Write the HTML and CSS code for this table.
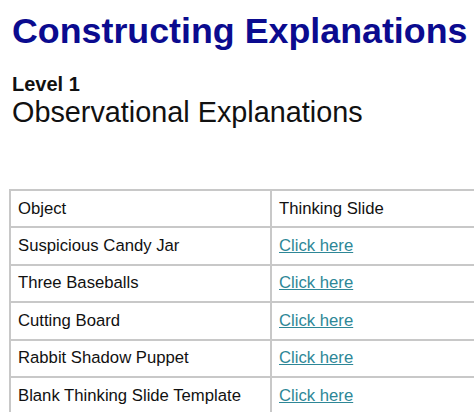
FILE: index.html
```html
<!DOCTYPE html>
<html>
<head>
<meta charset="utf-8">
<link rel="stylesheet" href="styles.css">
</head>
<body>
<h1 class="title">Constructing Explanations</h1>
<h2 class="level">Level 1</h2>
<p class="subtitle">Observational Explanations</p>
<div class="table-wrap">
<table class="grid">
  <tr><td class="c1">Object</td><td class="c2">Thinking Slide</td></tr>
  <tr><td class="c1">Suspicious Candy Jar</td><td class="c2"><a href="#">Click here</a></td></tr>
  <tr><td class="c1">Three Baseballs</td><td class="c2"><a href="#">Click here</a></td></tr>
  <tr><td class="c1">Cutting Board</td><td class="c2"><a href="#">Click here</a></td></tr>
  <tr><td class="c1">Rabbit Shadow Puppet</td><td class="c2"><a href="#">Click here</a></td></tr>
  <tr><td class="c1">Blank Thinking Slide Template</td><td class="c2"><a href="#">Click here</a></td></tr>
</table>
</div>
</body>
</html>
```
FILE: styles.css
```css
html, body { margin: 0; padding: 0; background: #fff; overflow: hidden; }
body { font-family: "Liberation Sans", Arial, sans-serif; color: #111; width: 474px; height: 412px; }
.title { margin: 0; padding: 11px 0 0 12px; font-size: 35.8px; font-weight: bold; color: #0b0b8f; line-height: 40px; white-space: nowrap; }
.level { margin: 21px 0 0 12px; font-size: 20px; font-weight: bold; line-height: 24px; color: #111; }
.subtitle { margin: 0 0 0 12px; font-size: 28.8px; line-height: 32px; color: #111; white-space: nowrap; }
.table-wrap { margin: 61px 0 0 9px; width: 465px; overflow: hidden; }
.grid { border-collapse: collapse; width: 600px; table-layout: fixed; }
.grid td { border: 2px solid #c8c8c8; height: 35.4px; padding: 0 7px; font-size: 16.7px; vertical-align: middle; white-space: nowrap; }
.c1 { width: 245px; }
.c2 { width: 330px; }
.grid a { color: #2e8797; text-decoration: underline; }
```
